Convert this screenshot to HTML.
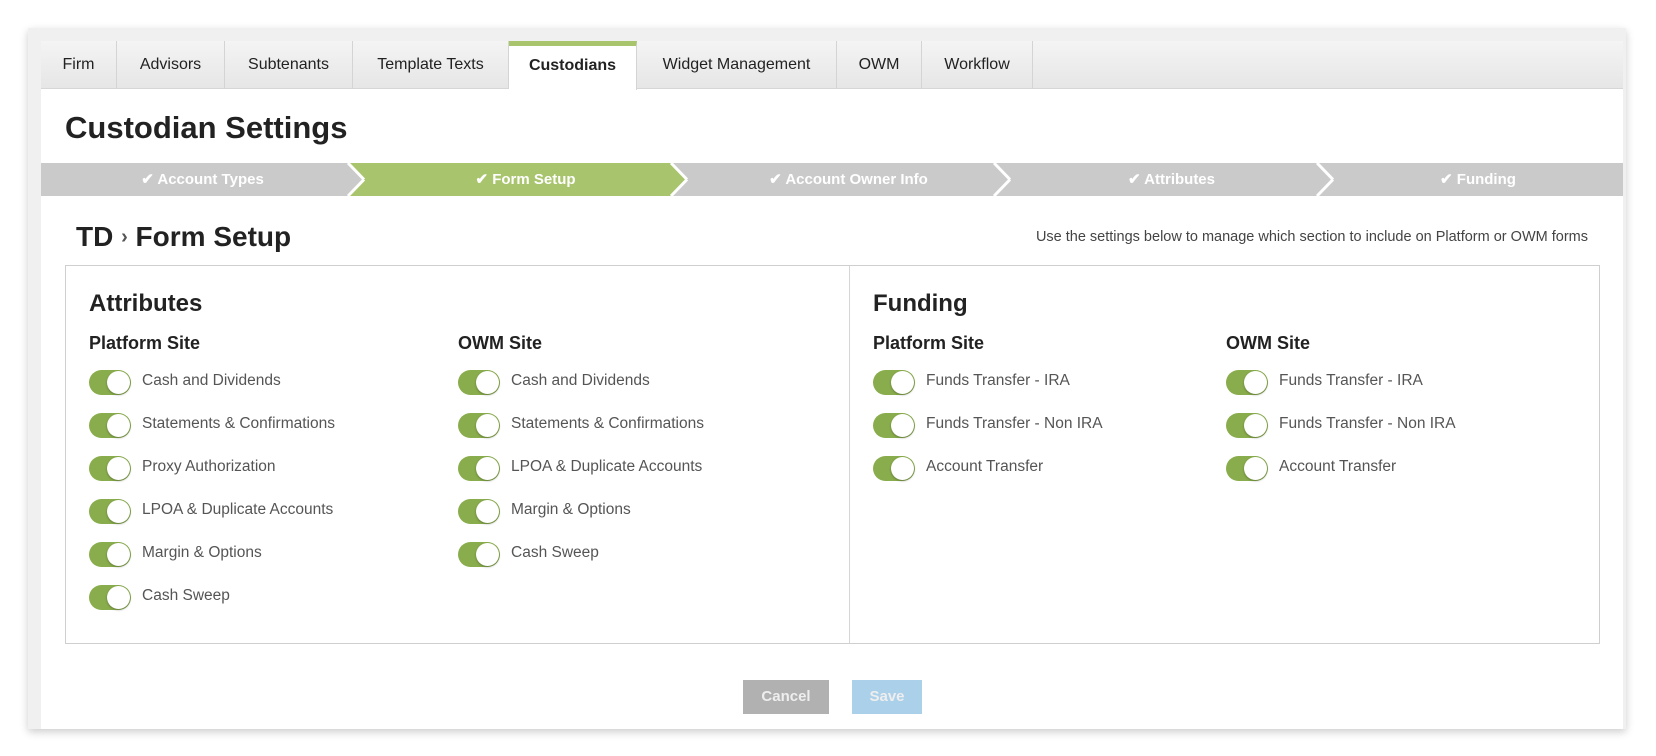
<!DOCTYPE html>
<html><head><meta charset="utf-8"><style>
*{box-sizing:border-box;margin:0;padding:0}
body{width:1656px;height:756px;background:#fff;font-family:"Liberation Sans",Arial,sans-serif;position:relative;overflow:hidden}
.frame{position:absolute;left:28px;top:28px;width:1598px;height:701px;background:#f0f0f0;box-shadow:0 3px 8px rgba(0,0,0,.2)}
.inner{position:absolute;left:41px;top:41px;width:1582px;height:688px;background:#fff}
.tabs{position:absolute;left:0;top:0;width:1582px;height:48px;background:linear-gradient(#f4f4f4,#e6e6e6);border-bottom:1px solid #d6d6d6}
.tab{position:absolute;top:0;height:48px;border-right:1px solid #d4d4d4;font-size:16px;color:#222;text-align:center;line-height:48px}
.tab.act{background:#fff;font-weight:bold;border-top:5px solid #a8c46d;line-height:40px;height:49px}
.abs{position:absolute;white-space:nowrap}
.steps{position:absolute;left:0;top:122px;height:33px;width:1582px}
.step{position:absolute;top:122px;height:33px;color:#fff;font-weight:bold;font-size:15px;line-height:33px;text-align:center}
.panel{position:absolute;left:24px;top:224px;width:1535px;height:379px;border:1px solid #cfcfcf}
.h2{font-size:24px;font-weight:bold;color:#222}
.h3{font-size:18px;font-weight:bold;color:#222}
.tg{position:absolute;width:42px;height:25px;border-radius:13px;background:#89ad4c}
.tg::after{content:"";position:absolute;right:1px;top:1px;width:23px;height:23px;border-radius:50%;background:#fff;box-shadow:0 1px 2px rgba(0,0,0,.3)}
.lb{position:absolute;font-size:15.5px;color:#555;white-space:nowrap}
.btn{position:absolute;top:639px;height:34px;line-height:34px;text-align:center;color:#eee;font-weight:bold;font-size:15px}
</style></head><body>
<div class="frame"></div>
<div class="inner">
<div class="tabs">
<div class="tab" style="left:0;width:76px">Firm</div>
<div class="tab" style="left:76px;width:108px">Advisors</div>
<div class="tab" style="left:184px;width:128px">Subtenants</div>
<div class="tab" style="left:312px;width:156px">Template Texts</div>
<div class="tab act" style="left:468px;width:128px">Custodians</div>
<div class="tab" style="left:596px;width:200px">Widget Management</div>
<div class="tab" style="left:796px;width:85px">OWM</div>
<div class="tab" style="left:881px;width:111px">Workflow</div>
</div>
<div class="abs" style="left:24px;top:69px;font-size:31px;font-weight:bold;color:#222">Custodian Settings</div>
<svg class="steps" width="1582" height="33" viewBox="0 0 1582 33">
<polygon points="0,0 307,0 323,16.5 307,33 0,33" fill="#cacaca"/>
<polygon points="307,0 630,0 646,16.5 630,33 307,33 323,16.5" fill="#a8c46d"/>
<polygon points="630,0 953,0 969,16.5 953,33 630,33 646,16.5" fill="#cacaca"/>
<polygon points="953,0 1276,0 1292,16.5 1276,33 953,33 969,16.5" fill="#cacaca"/>
<polygon points="1276,0 1582,0 1582,33 1276,33 1292,16.5" fill="#cacaca"/>
<line x1="307" y1="0" x2="323" y2="16.5" stroke="#fff" stroke-width="3"/><line x1="323" y1="16.5" x2="307" y2="33" stroke="#fff" stroke-width="3"/>
<line x1="630" y1="0" x2="646" y2="16.5" stroke="#fff" stroke-width="3"/><line x1="646" y1="16.5" x2="630" y2="33" stroke="#fff" stroke-width="3"/>
<line x1="953" y1="0" x2="969" y2="16.5" stroke="#fff" stroke-width="3"/><line x1="969" y1="16.5" x2="953" y2="33" stroke="#fff" stroke-width="3"/>
<line x1="1276" y1="0" x2="1292" y2="16.5" stroke="#fff" stroke-width="3"/><line x1="1292" y1="16.5" x2="1276" y2="33" stroke="#fff" stroke-width="3"/>
</svg>
<div class="step" style="left:0;width:323px">✔ Account Types</div>
<div class="step" style="left:323px;width:323px">✔ Form Setup</div>
<div class="step" style="left:646px;width:323px">✔ Account Owner Info</div>
<div class="step" style="left:969px;width:323px">✔ Attributes</div>
<div class="step" style="left:1292px;width:290px">✔ Funding</div>
<div class="abs" style="left:35px;top:180px;font-size:28px;font-weight:bold;color:#222">TD <span style="font-size:20px;color:#555;position:relative;top:-3px">›</span> Form Setup</div>
<div class="abs" style="right:35px;top:188px;font-size:14.5px;color:#444">Use the settings below to manage which section to include on Platform or OWM forms</div>
<div class="panel">
<div style="position:absolute;left:783px;top:0;width:1px;height:377px;background:#d6d6d6"></div>
<div class="abs h2" style="left:23px;top:24px">Attributes</div>
<div class="abs h3" style="left:23px;top:67px">Platform Site</div>
<div class="abs h3" style="left:392px;top:67px">OWM Site</div>
<div class="abs h2" style="left:807px;top:24px">Funding</div>
<div class="abs h3" style="left:807px;top:67px">Platform Site</div>
<div class="abs h3" style="left:1160px;top:67px">OWM Site</div>

<div class="tg" style="left:23px;top:104px"></div><div class="lb" style="left:76px;top:106px">Cash and Dividends</div>
<div class="tg" style="left:23px;top:147px"></div><div class="lb" style="left:76px;top:149px">Statements &amp; Confirmations</div>
<div class="tg" style="left:23px;top:190px"></div><div class="lb" style="left:76px;top:192px">Proxy Authorization</div>
<div class="tg" style="left:23px;top:233px"></div><div class="lb" style="left:76px;top:235px">LPOA &amp; Duplicate Accounts</div>
<div class="tg" style="left:23px;top:276px"></div><div class="lb" style="left:76px;top:278px">Margin &amp; Options</div>
<div class="tg" style="left:23px;top:319px"></div><div class="lb" style="left:76px;top:321px">Cash Sweep</div>

<div class="tg" style="left:392px;top:104px"></div><div class="lb" style="left:445px;top:106px">Cash and Dividends</div>
<div class="tg" style="left:392px;top:147px"></div><div class="lb" style="left:445px;top:149px">Statements &amp; Confirmations</div>
<div class="tg" style="left:392px;top:190px"></div><div class="lb" style="left:445px;top:192px">LPOA &amp; Duplicate Accounts</div>
<div class="tg" style="left:392px;top:233px"></div><div class="lb" style="left:445px;top:235px">Margin &amp; Options</div>
<div class="tg" style="left:392px;top:276px"></div><div class="lb" style="left:445px;top:278px">Cash Sweep</div>

<div class="tg" style="left:807px;top:104px"></div><div class="lb" style="left:860px;top:106px">Funds Transfer - IRA</div>
<div class="tg" style="left:807px;top:147px"></div><div class="lb" style="left:860px;top:149px">Funds Transfer - Non IRA</div>
<div class="tg" style="left:807px;top:190px"></div><div class="lb" style="left:860px;top:192px">Account Transfer</div>

<div class="tg" style="left:1160px;top:104px"></div><div class="lb" style="left:1213px;top:106px">Funds Transfer - IRA</div>
<div class="tg" style="left:1160px;top:147px"></div><div class="lb" style="left:1213px;top:149px">Funds Transfer - Non IRA</div>
<div class="tg" style="left:1160px;top:190px"></div><div class="lb" style="left:1213px;top:192px">Account Transfer</div>
</div>
<div class="btn" style="left:702px;width:86px;background:#b1b1b1">Cancel</div>
<div class="btn" style="left:811px;width:70px;background:#abd0ea">Save</div>
</div>
</body></html>
